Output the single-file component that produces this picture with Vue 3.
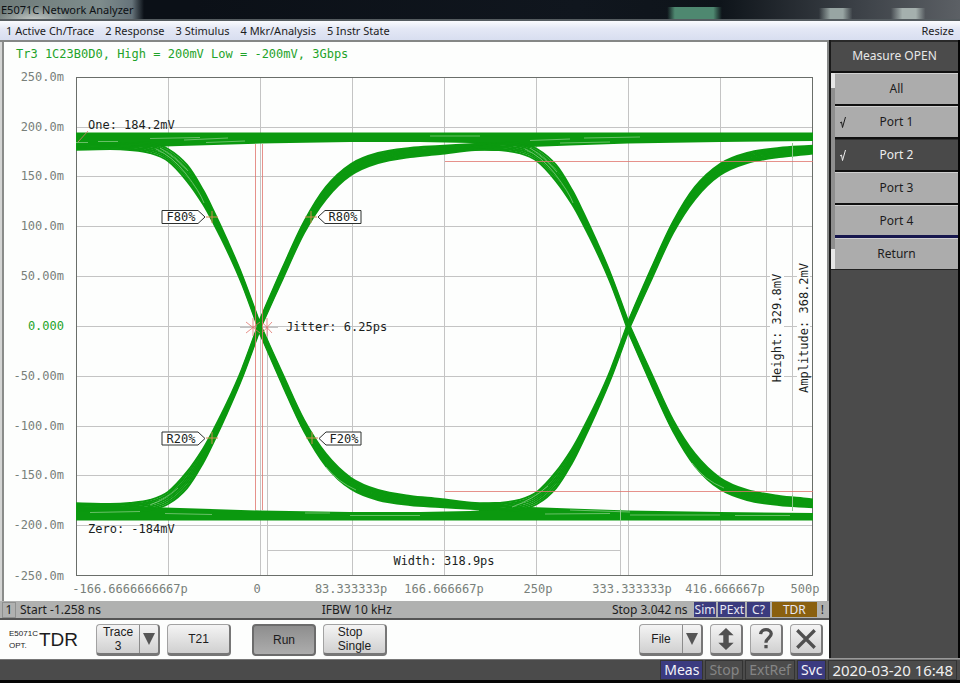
<script setup>
const menus = ['1 Active Ch/Trace', '2 Response', '3 Stimulus', '4 Mkr/Analysis', '5 Instr State']

const softkeys = [
  { label: 'All' },
  { label: 'Port 1', ticked: true },
  { label: 'Port 2', ticked: true, active: true },
  { label: 'Port 3' },
  { label: 'Port 4' },
  { label: 'Return', last: true },
]

const gridX = [168.5, 260.5, 352.5, 444.5, 536.5, 628.5, 720.5]
const gridY = [127.5, 176.5, 226.5, 276.5, 326.5, 376.5, 426.5, 475.5, 525.5]

const yLabels = [
  ['250.0m', 81], ['200.0m', 131], ['150.0m', 180], ['100.0m', 230], ['50.00m', 280], ['0.000', 330],
  ['-50.00m', 380], ['-100.0m', 430], ['-150.0m', 479], ['-200.0m', 529], ['-250.0m', 580],
]
const xLabels = [
  ['-166.6666666667p', 130], ['0', 257], ['83.333333p', 351], ['166.666667p', 444],
  ['250p', 538], ['333.333333p', 632], ['416.666667p', 725], ['500p', 805],
]

const tags = [
  { text: 'F80%', points: '162,210.5 198,210.5 205,217 198,223.5 162,223.5', x: 181, y: 221, cx: 212, cy: 217 },
  { text: 'R80%', points: '361,210.5 325,210.5 318,217 325,223.5 361,223.5', x: 343, y: 221, cx: 311, cy: 217 },
  { text: 'R20%', points: '162,432 198,432 205,438.5 198,445 162,445', x: 181, y: 443, cx: 212, cy: 438 },
  { text: 'F20%', points: '361,432 326,432 319,438.5 326,445 361,445', x: 344, y: 443, cx: 312, cy: 438 },
]

const PERIOD = 369
const MIRROR = 653

// Envelope of an edge leaving the high level: [x, upper y, lower y]
const leaving = [
  [70, 143, 150], [110, 142, 149], [130, 142, 150], [150, 143, 153], [168, 149, 161], [187, 165, 181],
  [203, 190, 204], [214, 212, 224], [227, 240, 250], [242, 275, 284], [259, 321, 330],
]
// Envelope of an edge settling on the high level
const settling = [
  [259, 322, 331], [283, 267, 278], [304, 222, 233], [326, 187, 199], [351, 164, 175],
  [378, 153, 163], [410, 148, 157], [440, 146, 154], [475, 144, 150], [500, 143, 150],
]

// Catmull-Rom spline through the points, written as cubic segments
function spline(points) {
  let d = `M${points[0][0]} ${points[0][1]}`
  for (let i = 0; i < points.length - 1; i++) {
    const p0 = points[i - 1] || points[i]
    const p1 = points[i]
    const p2 = points[i + 1]
    const p3 = points[i + 2] || p2
    const c = [
      p1[0] + (p2[0] - p0[0]) / 6, p1[1] + (p2[1] - p0[1]) / 6,
      p2[0] - (p3[0] - p1[0]) / 6, p2[1] - (p3[1] - p1[1]) / 6,
      p2[0], p2[1],
    ].map((v) => v.toFixed(1))
    d += `C${c.join(' ')}`
  }
  return d
}

function strands(env, count, shift) {
  const out = []
  for (let k = 0; k < count; k++) {
    const t = k / (count - 1)
    const upper = env.map(([x, a, b]) => [x + shift, a + (b - a) * t])
    out.push(spline(upper))
    out.push(spline(upper.map(([x, y]) => [x, MIRROR - y])))
  }
  return out
}

const traces = [
  ...strands(leaving, 7, 0),
  ...strands(leaving.slice(1), 7, PERIOD),
  ...strands(settling, 9, 0),
  ...strands(settling, 9, PERIOD),
]

const bandEdge = [
  [76, 146], [150, 147], [180, 146], [260, 143.5], [350, 142], [420, 142], [470, 143],
  [530, 147], [570, 145.5], [628, 143.5], [720, 142], [813, 141],
]
const bandTop = `M76 132.5 L${bandEdge.map((p) => p.join(' ')).join('L')}L813 132.5Z`
const bandBottom = `M76 520.5 L${bandEdge.map(([x, y]) => `${x} ${MIRROR - y + 1}`).join('L')}L813 520.5Z`

const glints = [
  'M76 142.5H88', 'M98 141.5L118 141.5', 'M184 140L228 138', 'M150 138.5L200 137.5', 'M206 142.5L245 141',
  'M430 136L480 136', 'M530 140.5L570 139', 'M584 138L640 137', 'M560 143L610 142',
  'M90 512.5L140 511.5', 'M165 513.5L212 514.5', 'M305 513L330 513', 'M350 515.5L420 515.5',
  'M545 514L610 513.5', 'M630 515L720 515', 'M735 515.5L790 515.5', 'M570 510L630 512',
  'M156 149Q172 156 186 174T204 203', 'M160 148Q176 157 188 171', 'M525 149Q541 156 555 174T573 203',
  'M530 148Q546 158 557 172', 'M512 507Q532 500 548 486', 'M150 505Q166 499 178 488', 'M326 467Q338 482 356 490', 'M692 463Q704 480 724 488',
]
</script>

<template>
  <div class="analyzer">
    <header class="titlebar"><h1>E5071C Network Analyzer</h1></header>
    <nav class="menubar">
      <button v-for="m in menus" :key="m" type="button">{{ m }}</button>
      <button type="button" class="resize">Resize</button>
    </nav>

    <div class="workspace">
      <main class="left">
        <section class="plot">
          <svg viewBox="4 42 823 558" role="img" aria-label="Eye diagram">
            <text class="trace-title" x="16" y="58">Tr3 1C23B0D0, High = 200mV Low = -200mV, 3Gbps</text>
            <g class="grid">
              <path v-for="x in gridX" :key="'x' + x" :d="`M${x} 77V576`" />
              <path v-for="y in gridY" :key="'y' + y" :d="`M76 ${y}H813`" />
              <path d="M267.5 326V576M620.5 326V576M267 550.5H620M766.5 162V492M792.5 143V511M240 327.5H278" />
            </g>
            <rect class="frame" x="76.5" y="77.5" width="736" height="498" />
            <g class="eye">
              <path class="band" :d="bandTop" />
              <path class="band" :d="bandBottom" />
              <path v-for="(d, i) in traces" :key="i" :d="d" clip-path="url(#plot-area)" />
            </g>
            <clipPath id="plot-area"><rect x="76" y="77" width="737" height="499" /></clipPath>
            <path v-for="(d, i) in glints" :key="'g' + i" class="glint" :d="d" />
            <path class="limits" d="M255.5 144V510M262.5 144V510M445 161.5H813M445 491.5H813" />
            <path class="limits" d="M78 142L88 131M246 322L260 333M246 333L260 322M253 318V336M262 322L272 333M262 333L272 322M267 318V336" />
            <path class="faint" d="M792.5 143V158M792.5 495V511M620.5 509V521" />
            <g v-for="t in tags" :key="t.text">
              <path class="cross" :d="`M${t.cx - 6} ${t.cy}H${t.cx + 6}M${t.cx} ${t.cy - 6}V${t.cy + 6}`" />
              <polygon class="tag" :points="t.points" />
              <text class="note" :x="t.x" :y="t.y" text-anchor="middle">{{ t.text }}</text>
            </g>
            <text
              v-for="[label, y] in yLabels" :key="label" class="axis" :class="{ zero: label === '0.000' }"
              x="64" :y="y" text-anchor="end"
            >{{ label }}</text>
            <text v-for="[label, x] in xLabels" :key="label" class="axis" :x="x" y="593" text-anchor="middle">{{ label }}</text>
            <text class="note" x="88" y="129">One: 184.2mV</text>
            <text class="note" x="88" y="533">Zero: -184mV</text>
            <text class="note" x="286" y="331">Jitter: 6.25ps</text>
            <text class="note" x="444" y="565" text-anchor="middle">Width: 318.9ps</text>
            <rect class="blank" x="770" y="272" width="14" height="112" />
            <rect class="blank" x="797" y="261" width="13" height="134" />
            <text class="note" transform="translate(781 328) rotate(-90)" text-anchor="middle">Height: 329.8mV</text>
            <text class="note" transform="translate(808 328) rotate(-90)" text-anchor="middle">Amplitude: 368.2mV</text>
          </svg>
        </section>

        <div class="channel">
          <span class="number">1</span>
          <span class="start">Start -1.258 ns</span>
          <span class="ifbw">IFBW 10 kHz</span>
          <span class="stop">Stop 3.042 ns</span>
          <span class="badge">Sim</span>
          <span class="badge">PExt</span>
          <span class="badge wide">C?</span>
          <span class="badge tdr">TDR</span>
          <span class="bang">!</span>
        </div>

        <div class="toolbar">
          <div class="logo"><span class="option">E5071C<br>OPT.</span><span class="name">TDR</span></div>
          <div class="split">
            <button type="button" class="main">Trace<br>3</button>
            <button type="button" class="drop" aria-label="Select trace">
              <svg viewBox="0 0 12 12"><path d="M0 0H12L6 12Z" /></svg>
            </button>
          </div>
          <button type="button" class="tool">T21</button>
          <button type="button" class="tool pressed">Run</button>
          <button type="button" class="tool stop-single"><span>Stop<br>Single</span></button>
          <div class="split file">
            <button type="button" class="main">File</button>
            <button type="button" class="drop" aria-label="File menu">
              <svg viewBox="0 0 12 12"><path d="M0 0H12L6 12Z" /></svg>
            </button>
          </div>
          <button type="button" class="tool icon" aria-label="Resize panel">
            <svg viewBox="0 0 20 22"><path d="M10 1L17 7.5H12.5V14.5H17L10 21L3 14.5H7.500V7.5H3Z" /></svg>
          </button>
          <button type="button" class="tool icon" aria-label="Help">
            <svg viewBox="0 0 20 22">
              <path class="line" d="M5 6.500C5.300 1.200 14.800 1.200 14.800 6.300C14.800 10 9.900 10.300 9.900 14.500" />
              <rect x="8.500" y="16.500" width="3" height="3" />
            </svg>
          </button>
          <button type="button" class="tool icon" aria-label="Close">
            <svg viewBox="0 0 20 22"><path class="line" d="M2 3L18 19M18 3L2 19" /></svg>
          </button>
        </div>
      </main>

      <aside class="softkeys">
        <h2>Measure OPEN</h2>
        <div class="keys">
          <button v-for="k in softkeys" :key="k.label" type="button" :class="{ active: k.active, last: k.last }">
            <svg v-if="k.ticked" class="tick" viewBox="0 0 8 13"><path d="M1 7L2.500 6L3.500 11.500L6.500 1" /></svg>
            {{ k.label }}
          </button>
        </div>
      </aside>
    </div>

    <footer class="statusbar">
      <span class="lamp on">Meas</span>
      <span class="lamp">Stop</span>
      <span class="lamp">ExtRef</span>
      <span class="lamp on">Svc</span>
      <time class="clock">2020-03-20 16:48</time>
    </footer>
  </div>
</template>

<style>
body {
  margin: 0;
  background: #000;
}
</style>

<style scoped>
* {
  box-sizing: border-box;
}
button {
  margin: 0;
  padding: 0;
  border: 0;
  background: none;
  color: inherit;
  font: inherit;
}
.analyzer {
  display: flex;
  flex-direction: column;
  min-height: 100vh;
  font-family: "Noto Sans", sans-serif;
  font-size: 12px;
  color: #1c1c1c;
  background: #4b4b4b;
}
.titlebar {
  height: 21px;
  border-bottom: 2px solid #555c60;
  background:
    radial-gradient(ellipse 40px 14px at 34px 20px, #c3c8c5, transparent),
    linear-gradient(90deg, #6f7b79, #7e8c8c 100px, #66737a 132px, transparent 144px),
    linear-gradient(90deg, transparent 69.5%, #4e8870 70.3%, #4e8870 74.3%, transparent 75.2%) 0 7px / 100% 14px no-repeat,
    linear-gradient(90deg, transparent 85.3%, #98a5a3 86.5%, #98a5a3 87.8%, transparent 88.8%, transparent 92.8%, #a5b0ae 94%, #a5b0ae 95.4%, transparent 96.4%) 0 8px / 100% 13px no-repeat,
    linear-gradient(90deg, #0b1017 20%, #10161e 60%, #0e141a 75%, #3e4349 90%, #5c6065);
}
h1 {
  margin: 0;
  padding-left: 1px;
  font-size: 11px;
  font-weight: 400;
  line-height: 20px;
  color: #0c1014;
}
.menubar {
  display: flex;
  gap: 11px;
  height: 19px;
  padding: 0 6px;
  font-size: 11px;
  line-height: 18px;
  background: linear-gradient(#fafbfe, #e4e8f5 40%, #d8def0);
}
.resize {
  margin-left: auto;
}
.workspace {
  display: flex;
  flex: 1;
}
.left {
  display: flex;
  flex: 1;
  flex-direction: column;
  min-width: 0;
  background: #fdfefd;
}
.plot {
  flex: 1;
  padding-left: 2px;
  border: solid #858786;
  border-width: 2px 2px 0 0;
  background: linear-gradient(90deg, #d4d5d4 2px, #8a8c8a 2px, #8a8c8a 4px, #fdfefd 4px);
}
.plot svg {
  display: block;
  width: 100%;
  padding-left: 2px;
}
.plot text {
  font-family: "DejaVu Sans Mono", "Liberation Mono", monospace;
  font-size: 12px;
}
.trace-title,
.plot .zero {
  fill: #1fa32a;
}
.axis {
  fill: #78807a;
}
.note {
  fill: #1b1f1d;
}
.grid path {
  fill: none;
  stroke: #c4c4c4;
}
.frame {
  fill: none;
  stroke: #6a6e6a;
}
.eye path {
  fill: none;
  stroke: #0b990f;
  stroke-width: 2;
}
.eye .band {
  fill: #0b990f;
  stroke: none;
}
.glint {
  fill: none;
  stroke: #8fd08c;
  stroke-opacity: 0.7;
}
.limits {
  fill: none;
  stroke: #e0766e;
  stroke-opacity: 0.8;
}
.faint {
  stroke: #8cc88a;
}
.cross {
  stroke: #d08c50;
}
.tag {
  fill: #fff;
  stroke: #2d302e;
}
.blank {
  fill: #fdfefd;
}
.channel {
  display: flex;
  align-items: center;
  gap: 2px;
  height: 19px;
  padding: 0 3px 0 2px;
  border-bottom: 2px solid #555;
  background: #b0b1b0;
  line-height: 15px;
}
.number {
  width: 14px;
  border: 1px solid #8f908f;
  line-height: 14px;
  text-align: center;
}
.start,
.stop {
  flex: 1;
  padding: 0 4px 0 2px;
}
.stop {
  text-align: right;
}
.ifbw {
  margin-left: 4px;
}
.badge {
  padding: 0 1px;
  background: #3b3b7e;
  color: #e8e8f4;
}
.badge.wide {
  padding: 0 5px;
}
.badge.tdr {
  padding: 0 11px;
  background: #8a600f;
}
.bang {
  padding: 0 2px;
}
.toolbar {
  display: flex;
  align-items: center;
  gap: 7px;
  height: 39px;
  padding: 0 6px 0 9px;
  background: #fdfefd;
  font-family: "Liberation Sans", sans-serif;
}
.logo {
  display: flex;
  align-items: center;
  gap: 1px;
  width: 80px;
}
.option {
  font-size: 8px;
  line-height: 12px;
}
.name {
  font-size: 19px;
  line-height: 30px;
}
.tool,
.split {
  width: 64px;
  height: 32px;
  border: 1px solid #a2a2a2;
  border-right: 2px solid #777;
  border-bottom: 3px solid #777;
  border-radius: 4px;
  background: linear-gradient(#f4f4f4, #d0d0d0);
}
.split {
  display: flex;
}
.main {
  flex: 1;
  line-height: 14px;
}
.drop {
  width: 19px;
  border-left: 1px solid #8c8c8c;
}
.drop svg {
  display: block;
  width: 12px;
  height: 12px;
  margin: auto;
  fill: #555;
}
.pressed {
  margin-left: 14px;
  border: 2px solid #6c6c6c;
  background: linear-gradient(#8e8e8e, #adadad);
}
.stop-single {
  line-height: 14px;
}
.stop-single span {
  display: inline-block;
  text-align: left;
}
.file {
  margin-left: auto;
}
.icon {
  width: 33px;
}
.icon svg {
  display: block;
  width: 22px;
  height: 24px;
  margin: auto;
  fill: #505050;
}
.icon .line {
  fill: none;
  stroke: #505050;
  stroke-width: 3;
}
.softkeys {
  width: 131px;
  padding: 0 2px;
  border-bottom: 1px solid #999;
  background: linear-gradient(90deg, #1a1a1a 2px, #4b4b4b 2px, #4b4b4b 129px, #050505 129px);
}
h2 {
  margin: 0;
  height: 31px;
  border-top: 2px solid #292929;
  font-size: 12px;
  font-weight: 400;
  line-height: 28px;
  text-align: center;
  color: #e8e8e8;
}
.keys {
  display: flex;
  flex-direction: column;
  gap: 2px;
  padding: 2px 0 0 4px;
  border-bottom: 1px solid #222;
  background:
    linear-gradient(#101010 2px, #e6e6e6 2px, #e6e6e6 17px, #8f8f8f 17px, #8f8f8f 178px, #e6e6e6 178px) 0 0 / 4px 100% no-repeat,
    #101010;
}
.keys button {
  position: relative;
  height: 31px;
  border-top: 1px solid #d0d0d0;
  background: #acacac;
  line-height: 28px;
}
.keys .active {
  border-top-color: #2e2e2e;
  background: #494949;
  color: #ededed;
}
.keys .last {
  box-shadow: 0 -3px #17174e;
}
.tick {
  position: absolute;
  top: 9px;
  left: 4px;
  width: 8px;
  height: 13px;
  fill: none;
  stroke: currentColor;
}
.statusbar {
  display: flex;
  justify-content: flex-end;
  gap: 2px;
  height: 24px;
  padding: 0 3px;
  border-top: 1px solid #777;
  border-bottom: 3px solid #050505;
  font-size: 15px;
  background: #4b4b4b;
}
.lamp,
.clock {
  padding: 0 3px;
  border: 1px solid #333;
  line-height: 18px;
}
.lamp {
  font-size: 14px;
  color: #858585;
}
.lamp.on {
  background: #3b3b80;
  color: #f4f4fa;
}
.clock {
  color: #f0f0f0;
}
</style>
